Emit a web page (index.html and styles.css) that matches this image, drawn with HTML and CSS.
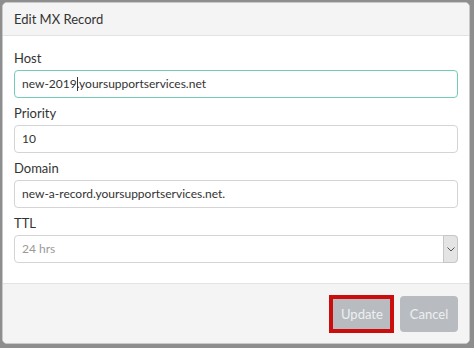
FILE: index.html
```html
<!DOCTYPE html>
<html>
<head>
<meta charset="utf-8">
<link rel="stylesheet" href="styles.css">
</head>
<body>
<div class="modal">
  <div class="modal-header">Edit MX Record</div>
  <div class="modal-body">
    <div class="group">
      <div class="label">Host</div>
      <div class="field focused">new-2019<span class="caret"></span>.yoursupportservices.net</div>
    </div>
    <div class="group">
      <div class="label">Priority</div>
      <div class="field">10</div>
    </div>
    <div class="group">
      <div class="label">Domain</div>
      <div class="field">new-a-record.yoursupportservices.net.</div>
    </div>
    <div class="group">
      <div class="label">TTL</div>
      <div class="field select">
        <span class="placeholder">24 hrs</span>
        <span class="arrow"><svg width="8" height="5" viewBox="0 0 8 5"><path d="M0.5 0.5 L4 4 L7.5 0.5" fill="none" stroke="#555" stroke-width="1"/></svg></span>
      </div>
    </div>
  </div>
  <div class="modal-footer">
    <button class="btn btn-update">Update</button>
    <button class="btn btn-cancel">Cancel</button>
  </div>
</div>
</body>
</html>
```
FILE: styles.css
```css
* { box-sizing: border-box; }
html, body { margin: 0; padding: 0; }
body {
  width: 474px;
  height: 348px;
  background: #8e8e8e;
  font-family: Lato, "Open Sans", sans-serif;
  color: #333;
  padding: 2px 4px 0 2px;
  overflow: hidden;
}
.modal {
  width: 468px;
  height: 342px;
  background: #fff;
  border: 1px solid #c9c9c9;
  border-radius: 5px;
  overflow: hidden;
  display: flex;
  flex-direction: column;
}
.modal-header {
  height: 33px;
  background: #f4f4f4;
  border-bottom: 1px solid #e3e3e3;
  padding: 0 11px;
  font-size: 13px;
  line-height: 32px;
  color: #333;
}
.modal-body {
  padding: 12px 11px 15px;
  border-bottom: 1px solid #e3e3e3;
}
.group { margin-bottom: 5px; }
.label {
  font-size: 13px;
  line-height: 20px;
  margin-bottom: 2px;
  color: #333;
}
.field {
  position: relative;
  height: 28px;
  border: 1px solid #d4d4d4;
  border-radius: 4px;
  padding: 0 7px;
  font-size: 12px;
  line-height: 26px;
  color: #333;
  white-space: nowrap;
}
.field.focused { border-color: #72cdb8; }
.caret {
  display: inline-block;
  width: 1px;
  height: 14px;
  background: #333;
  vertical-align: -3px;
  margin-right: -1px;
}
.select { padding-right: 0; }
.placeholder { color: #9a9a9a; }
.arrow {
  position: absolute;
  top: -1px;
  right: -1px;
  width: 15px;
  height: 28px;
  background: #e4e4e4;
  border: 1px solid #c6c6c6;
  border-radius: 0 4px 4px 0;
  display: flex;
  align-items: center;
  justify-content: center;
}
.modal-footer {
  flex: 1;
  background: #f4f4f4;
  display: flex;
  justify-content: flex-end;
  align-items: flex-start;
  gap: 6px;
  padding: 12px 11px 0;
}
.btn {
  font-family: Lato, "Open Sans", sans-serif;
  font-size: 13px;
  height: 36px;
  border: none;
  border-radius: 4px;
  background: #b8bcc0;
  color: #eef0f2;
  padding: 0 8px;
  margin: 0;
}
.btn-update {
  width: 65px;
  border: 4px solid #cc0d0d;
  border-radius: 0;
  height: 38px;
  margin-top: -1px;
}
.btn-cancel { width: 58px; }
```
